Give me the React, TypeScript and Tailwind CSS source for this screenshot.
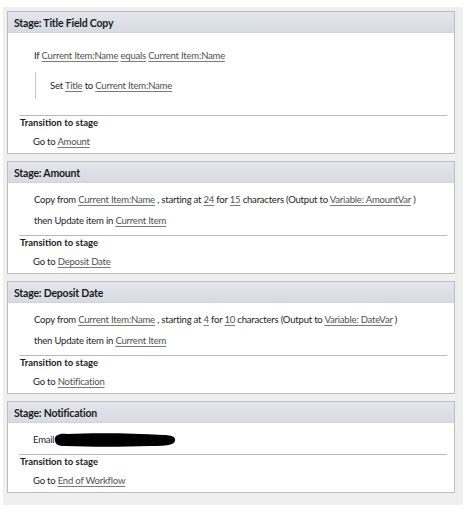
import React from "react";

const L = ({ children }: { children: React.ReactNode }) => (
  <span className="underline text-[#505050] decoration-[#7a7a7a] underline-offset-[2px]">{children}</span>
);

function Card({ title, children, next }: { title: string; children: React.ReactNode; next: string }) {
  return (
    <div className="shrink-0 border border-[#bdbdbd] bg-white">
      <div className="h-[21px] pt-[2px] leading-[19px] pl-[6px] font-bold text-[10.5px] text-[#1a1a1a] bg-gradient-to-b from-[#e3e6ec] to-[#d7dbe2] border-b border-[#cfd3da]">
        {title}
      </div>
      {children}
      <div className="ml-[11px] mr-[7px] border-t border-[#b9b9b9]">
        <div className="h-[13px] pt-[1px] leading-[12px] pl-[1px] font-bold text-[#1a1a1a] tracking-normal">Transition to stage</div>
        <div className="mt-[3px] h-[18px] pt-[2px] leading-[16px] pl-[14px]">
          Go to <L>{next}</L>
        </div>
      </div>
      <div className="h-[3px]" />
    </div>
  );
}

export default function App() {
  return (
    <div
      className="w-[474px] h-[514px] bg-white pt-[7px] pl-[3px] text-[9.5px] tracking-[-0.2px] text-[#222] whitespace-nowrap"
      style={{ fontFamily: "Lato, 'Open Sans', sans-serif" }}
    >
      <div className="w-[460px] h-[498px] bg-[#efefef] pt-[4px] pl-[4px] pr-[8px] flex flex-col gap-[7px]">
        <Card title="Stage: Title Field Copy" next="Amount">
          <div className="pt-[15px] pl-[26px] h-[31px] leading-[16px]">
            If <L>Current Item:Name</L> <L>equals</L> <L>Current Item:Name</L>
          </div>
          <div className="mt-[8px] ml-[27px] h-[27px] pt-[2px] border-l border-[#c4c4c4] flex items-center pl-[14px]">
            <span>
              Set <L>Title</L> to <L>Current Item:Name</L>
            </span>
          </div>
          <div className="h-[16px]" />
        </Card>
        <Card title="Stage: Amount" next="Deposit Date">
          <div className="pt-[7px] pl-[26px]">
            <div className="h-[18px] pt-[2px] leading-[16px]">
              Copy from <L>Current Item:Name</L> , starting at <L>24</L> for <L>15</L> characters (Output to{" "}
              <L>Variable: AmountVar</L> )
            </div>
            <div className="mt-[3px] h-[18px] pt-[2px] leading-[16px]">
              then Update item in <L>Current Item</L>
            </div>
          </div>
          <div className="h-[6px]" />
        </Card>
        <Card title="Stage: Deposit Date" next="Notification">
          <div className="pt-[7px] pl-[26px]">
            <div className="h-[18px] pt-[2px] leading-[16px]">
              Copy from <L>Current Item:Name</L> , starting at <L>4</L> for <L>10</L> characters (Output to{" "}
              <L>Variable: DateVar</L> )
            </div>
            <div className="mt-[3px] h-[18px] pt-[2px] leading-[16px]">
              then Update item in <L>Current Item</L>
            </div>
          </div>
          <div className="h-[6px]" />
        </Card>
        <Card title="Stage: Notification" next="End of Workflow">
          <div className="pt-[7px] pl-[25px]">
            <div className="h-[18px] pt-[2px] leading-[16px] flex items-center">
              <span>Email</span>
              <svg width="126" height="16" viewBox="0 0 126 16" className="-ml-[3px] -mt-[1px]">
                <path
                  d="M4 8 C3 3 9 1 16 2 C40 1 80 1 112 3 C121 3 125 5 124 9 C123 13 116 14 100 14 C70 15 40 15 14 14 C7 14 4 12 4 8 Z"
                  fill="#000"
                />
              </svg>
            </div>
          </div>
          <div className="h-[6px]" />
        </Card>
      </div>
    </div>
  );
}
